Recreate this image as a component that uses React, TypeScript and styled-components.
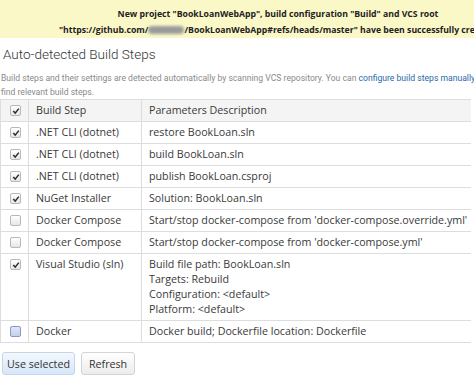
import styled, { createGlobalStyle } from "styled-components";

const GlobalStyle = createGlobalStyle`
  html, body {
    margin: 0;
    padding: 0;
    background: #ffffff;
    overflow: hidden;
  }
  body {
    font-family: "Open Sans", "Noto Sans", sans-serif;
    color: #333;
  }
`;

interface Step {
  checked: boolean;
  name: string;
  params: string[];
  hover?: boolean;
}

const steps: Step[] = [
  { checked: true, name: ".NET CLI (dotnet)", params: ["restore BookLoan.sln"] },
  { checked: true, name: ".NET CLI (dotnet)", params: ["build BookLoan.sln"] },
  { checked: true, name: ".NET CLI (dotnet)", params: ["publish BookLoan.csproj"] },
  { checked: true, name: "NuGet Installer", params: ["Solution: BookLoan.sln"] },
  {
    checked: false,
    name: "Docker Compose",
    params: ["Start/stop docker-compose from 'docker-compose.override.yml'"],
  },
  {
    checked: false,
    name: "Docker Compose",
    params: ["Start/stop docker-compose from 'docker-compose.yml'"],
  },
  {
    checked: true,
    name: "Visual Studio (sln)",
    params: [
      "Build file path: BookLoan.sln",
      "Targets: Rebuild",
      "Configuration: <default>",
      "Platform: <default>",
    ],
  },
  {
    checked: false,
    hover: true,
    name: "Docker",
    params: ["Docker build; Dockerfile location: Dockerfile"],
  },
];

function CheckBox({ checked, hover }: { checked: boolean; hover?: boolean }) {
  return (
    <Box $hover={hover}>
      {checked && (
        <svg width="8" height="8" viewBox="0 0 8 8">
          <path d="M1.3 4.1 L3.2 6.1 L6.8 1.6" fill="none" stroke="#2b2b2b" strokeWidth="1.5" />
        </svg>
      )}
    </Box>
  );
}

function App() {
  return (
    <Page>
      <GlobalStyle />
      <Banner>
        <div>New project "BookLoanWebApp", build configuration "Build" and VCS root</div>
        <div>
          "https://github.com/<Redacted />/BookLoanWebApp#refs/heads/master" have been successfully
          created.
        </div>
      </Banner>

      <Heading>Auto-detected Build Steps</Heading>
      <Description>
        <Line>
          Build steps and their settings are detected automatically by scanning VCS repository. You
          can <Link>configure build steps manually</Link>, or
        </Line>
        <Line>find relevant build steps.</Line>
      </Description>

      <Table>
        <colgroup>
          <col style={{ width: 28 }} />
          <col style={{ width: 113 }} />
          <col />
        </colgroup>
        <thead>
          <tr>
            <CheckCell as="th" $head>
              <CheckBox checked />
            </CheckCell>
            <HeadCell>Build Step</HeadCell>
            <HeadCell>Parameters Description</HeadCell>
          </tr>
        </thead>
        <tbody>
          {steps.map((s, i) => (
            <tr key={i}>
              <CheckCell>
                <CheckBox checked={s.checked} hover={s.hover} />
              </CheckCell>
              <Cell>{s.name}</Cell>
              <Cell>
                {s.params.map((p, j) => (
                  <Line key={j}>{p}</Line>
                ))}
              </Cell>
            </tr>
          ))}
        </tbody>
      </Table>

      <Buttons>
        <Button $primary>Use selected</Button>
        <Button>Refresh</Button>
      </Buttons>
    </Page>
  );
}

const Page = styled.div`
  width: 600px;
  font-size: 11px;
`;

const Banner = styled.div`
  width: 556px;
  height: 38px;
  box-sizing: border-box;
  background: #fbf8c8;
  padding: 6px 0 0;
  text-align: center;
  font-weight: 700;
  font-size: 8.7px;
  line-height: 16px;
  color: #222;
  white-space: nowrap;
`;

const Redacted = styled.span`
  display: inline-block;
  width: 36px;
  height: 8px;
  vertical-align: -1px;
  border-radius: 4px;
  background: #9a9a9a;
  filter: blur(1.5px);
`;

const Heading = styled.h1`
  margin: 6px 0 0 3px;
  font-family: Roboto, "Open Sans", sans-serif;
  font-size: 13.5px;
  line-height: 20px;
  font-weight: 300;
  color: #333;
  white-space: nowrap;
`;

const Description = styled.div`
  margin: 7px 0 0 1px;
  font-family: Roboto, "Open Sans", sans-serif;
  font-size: 8.6px;
  line-height: 14px;
  color: #8a8a8a;
  white-space: nowrap;
`;

const Link = styled.span`
  color: #2c68a8;
`;

const Line = styled.div`
  white-space: nowrap;
`;

const Table = styled.table`
  margin-top: 0;
  width: 471px;
  table-layout: fixed;
  border-collapse: collapse;
  font-size: 10.7px;
  color: #3a3a3a;
`;

const HeadCell = styled.th`
  text-align: left;
  font-weight: 400;
  background: #f4f4f4;
  border: 1px solid #ddd;
  border-right: none;
  padding: 3px 7px;
  height: 15px;
  line-height: 15px;
  white-space: nowrap;
  overflow: hidden;
`;

const Cell = styled.td`
  border-top: 1px solid #ddd;
  border-bottom: 1px solid #ddd;
  border-left: 1px solid #ddd;
  padding: 3px 7px;
  line-height: 15px;
  vertical-align: top;
  white-space: nowrap;
  overflow: hidden;
`;

const CheckCell = styled.td<{ $head?: boolean }>`
  padding: 0;
  border: 1px solid #ddd;
  border-right: none;
  background: ${(p) => (p.$head ? "#f4f4f4" : "transparent")};
  vertical-align: top;
  text-align: left;
`;

const Box = styled.div<{ $hover?: boolean }>`
  margin: 5px 0 0 9px;
  width: 9px;
  height: 9px;
  border: 1px solid ${(p) => (p.$hover ? "#8a9ac8" : "#b8b8b8")};
  border-radius: 2px;
  background: ${(p) =>
    p.$hover ? "linear-gradient(#dfe6f7, #c4cfe8)" : "linear-gradient(#ffffff, #e6e6e6)"};
  display: flex;
  align-items: center;
  justify-content: center;
`;

const Buttons = styled.div`
  display: flex;
  gap: 6px;
  margin: 9px 0 0 2px;
`;

const Button = styled.button<{ $primary?: boolean }>`
  font-family: "Open Sans", "Noto Sans", sans-serif;
  font-size: 10.7px;
  color: #333;
  height: 23px;
  padding: 0 ${(p) => (p.$primary ? 4 : 7)}px;
  border: 1px solid ${(p) => (p.$primary ? "#c4d6ea" : "#d4d4d4")};
  border-radius: 3px;
  background: ${(p) =>
    p.$primary ? "linear-gradient(#f4f8fd, #d6e6f8)" : "linear-gradient(#ffffff, #ececec)"};
`;

export default App;
